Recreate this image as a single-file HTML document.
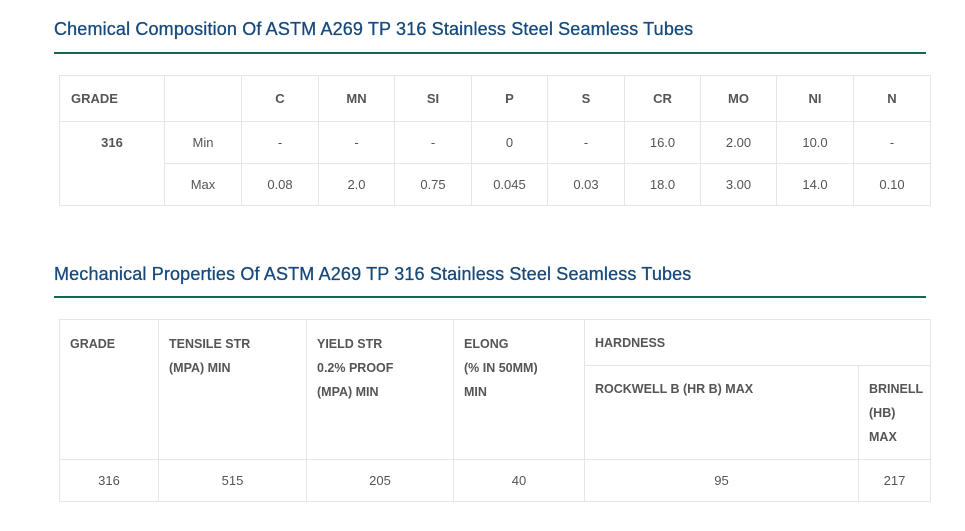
<!DOCTYPE html>
<html><head><meta charset="utf-8"><style>
body{margin:0;background:#fff;font-family:"Liberation Sans",sans-serif;color:#555;width:965px;height:531px;position:relative;overflow:hidden}
h2{position:absolute;left:54px;margin:0;font-size:18px;font-weight:normal;color:#174a7c;letter-spacing:0.15px;white-space:nowrap;-webkit-text-stroke:0.3px #174a7c}
.ul{position:absolute;left:54px;width:872px;height:2px;background:#0e6b52}
table{position:absolute;border-collapse:collapse;font-size:13px;table-layout:fixed}
td{border:1px solid #e6e6e6;padding:0;vertical-align:middle}
.c{text-align:center}
.b{font-weight:bold}
.t2 td{vertical-align:top;font-weight:bold;font-size:12.5px;line-height:24px;padding:12px 10px 0 10px}
.t2 td.d{font-weight:normal;vertical-align:middle;padding:0;text-align:center;font-size:13px}
</style></head><body>
<h2 style="top:19px">Chemical Composition Of ASTM A269 TP 316 Stainless Steel Seamless Tubes</h2>
<div class="ul" style="top:52px"></div>
<table style="left:59px;top:75px;width:871px">
<colgroup><col style="width:105px"><col style="width:77px"><col style="width:77px"><col style="width:76px"><col style="width:77px"><col style="width:76px"><col style="width:77px"><col style="width:76px"><col style="width:76px"><col style="width:77px"><col style="width:77px"></colgroup>
<tr style="height:46px"><td class="b" style="padding-left:11px">GRADE</td><td></td><td class="c b">C</td><td class="c b">MN</td><td class="c b">SI</td><td class="c b">P</td><td class="c b">S</td><td class="c b">CR</td><td class="c b">MO</td><td class="c b">NI</td><td class="c b">N</td></tr>
<tr style="height:42px"><td class="c b" rowspan="2" style="vertical-align:top;padding-top:13px">316</td><td class="c">Min</td><td class="c">-</td><td class="c">-</td><td class="c">-</td><td class="c">0</td><td class="c">-</td><td class="c">16.0</td><td class="c">2.00</td><td class="c">10.0</td><td class="c">-</td></tr>
<tr style="height:42px"><td class="c">Max</td><td class="c">0.08</td><td class="c">2.0</td><td class="c">0.75</td><td class="c">0.045</td><td class="c">0.03</td><td class="c">18.0</td><td class="c">3.00</td><td class="c">14.0</td><td class="c">0.10</td></tr>
</table>
<h2 style="top:264px">Mechanical Properties Of ASTM A269 TP 316 Stainless Steel Seamless Tubes</h2>
<div class="ul" style="top:296px"></div>
<table class="t2" style="left:59px;top:319px;width:871px">
<colgroup><col style="width:99px"><col style="width:148px"><col style="width:147px"><col style="width:131px"><col style="width:274px"><col style="width:72px"></colgroup>
<tr style="height:46px"><td rowspan="2">GRADE</td><td rowspan="2">TENSILE STR<br>(MPA) MIN</td><td rowspan="2">YIELD STR<br>0.2% PROOF<br>(MPA) MIN</td><td rowspan="2">ELONG<br>(% IN 50MM)<br>MIN</td><td colspan="2" style="padding-top:11px">HARDNESS</td></tr>
<tr style="height:94px"><td style="padding-top:11px">ROCKWELL B (HR B) MAX</td><td style="padding-top:11px">BRINELL<br>(HB)<br>MAX</td></tr>
<tr style="height:42px"><td class="d">316</td><td class="d">515</td><td class="d">205</td><td class="d">40</td><td class="d">95</td><td class="d">217</td></tr>
</table>
</body></html>
